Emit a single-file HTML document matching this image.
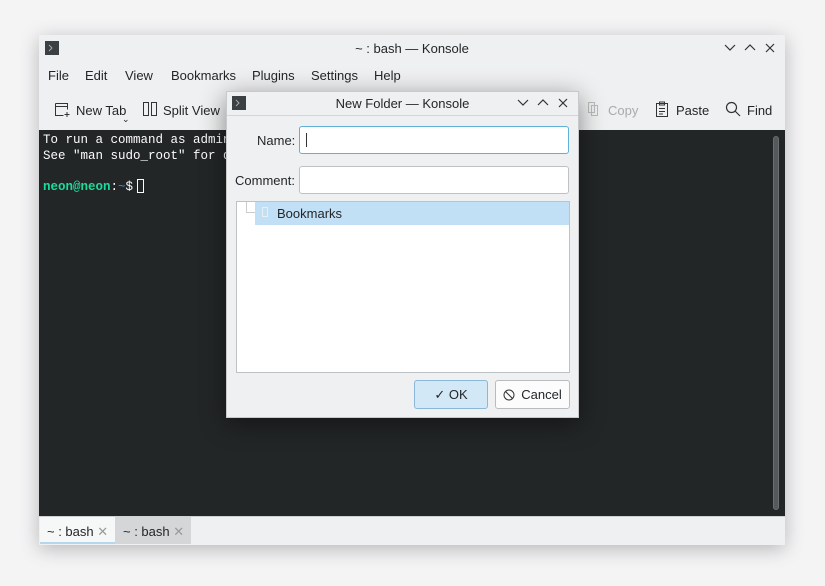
<!DOCTYPE html>
<html><head><meta charset="utf-8"><style>
*{box-sizing:border-box;margin:0;padding:0}
body{width:825px;height:586px;background:#f4f4f5;font-family:"Liberation Sans","DejaVu Sans",sans-serif;font-size:13px;color:#232629;position:relative;overflow:hidden}
.a{position:absolute}
.win{left:39px;top:35px;width:746px;height:510px;background:#eff0f1;box-shadow:0 4px 18px rgba(0,0,0,.25)}
.term{left:0;top:95px;width:746px;height:386px;background:#232627;font-family:"Liberation Mono",monospace;font-size:12.5px;color:#fcfcfc}
.mono{white-space:pre;line-height:15.5px}
.dlg{left:226px;top:91px;width:353px;height:327px;background:#eff0f1;box-shadow:0 6px 24px rgba(0,0,0,.45);border:1px solid #c8c9ca}
.field{background:#fff;border:1px solid #bfc2c5;border-radius:3px}
.btn{border:1px solid #b9bcbf;border-radius:3px;background:#fcfcfc;display:flex;align-items:center;justify-content:center;gap:6px}
svg{display:block}
</style></head><body>
<div class="a win">
 <div class="a" style="left:6px;top:6px;width:14px;height:14px;background:#3b4045"></div>
 <svg class="a" style="left:8px;top:9px" width="8" height="8"><path d="M2 1l3 3-3 3" stroke="#aaa" fill="none"/></svg>
 <div class="a" style="left:0;width:746px;top:6px;text-align:center;font-size:13px">~ : bash — Konsole</div>
 <svg class="a" style="left:684px;top:7px" width="56" height="12" stroke="#333" fill="none" stroke-width="1.2"><path d="M2 3l5 5 5-5M22 8l5-5 5 5M43 2l8 8M51 2l-8 8"/></svg>
 <div class="a" style="left:9px;top:33px;word-spacing:0">File</div>
 <div class="a" style="left:46px;top:33px">Edit</div>
 <div class="a" style="left:86px;top:33px">View</div>
 <div class="a" style="left:132px;top:33px">Bookmarks</div>
 <div class="a" style="left:213px;top:33px">Plugins</div>
 <div class="a" style="left:272px;top:33px">Settings</div>
 <div class="a" style="left:335px;top:33px">Help</div>
 <svg class="a" style="left:15px;top:66px" width="16" height="16" stroke="#333" fill="none"><path d="M1.5 2.5h12v6M1.5 2.5v12h8M1.5 5.5h12M13 11v5M10.5 13.5h5"/></svg>
 <div class="a" style="left:37px;top:68px">New Tab</div>
 <div class="a" style="left:83px;top:79px;font-size:9px">⌄</div>
 <svg class="a" style="left:103px;top:66px" width="16" height="16" stroke="#333" fill="none"><path d="M1.5 1.5h5v13h-5zM9.5 1.5h5v13h-5z"/></svg>
 <div class="a" style="left:124px;top:68px">Split View</div>
 <svg class="a" style="left:546px;top:66px" width="16" height="16" stroke="#bbb" fill="none"><path d="M3.5 1.5h6v10h-6zM6.5 4.5h6v10h-6z"/></svg>
 <div class="a" style="left:569px;top:68px;color:#a8aaac">Copy</div>
 <svg class="a" style="left:616px;top:66px" width="14" height="16" stroke="#333" fill="none"><path d="M1.5 2.5h11v13h-11zM4.5 1h5v3h-5zM4 7.5h6M4 10.5h6M4 13h4"/></svg>
 <div class="a" style="left:637px;top:68px">Paste</div>
 <svg class="a" style="left:686px;top:66px" width="16" height="16" stroke="#333" fill="none" stroke-width="1.2"><circle cx="6.5" cy="6.5" r="5"/><path d="M10 10l5 5"/></svg>
 <div class="a" style="left:708px;top:68px">Find</div>
 <div class="a term">
  <div class="a mono" style="left:4px;top:3px">To run a command as administrator (user "root"), use "sudo &lt;command&gt;".
See "man sudo_root" for details.

<span style="color:#1cdc9a;font-weight:bold">neon@neon</span>:<span style="color:#1d99f3">~</span>$ </div>
  <div class="a" style="left:98px;top:49px;width:7px;height:14px;border:1px solid #fcfcfc"></div>
  <div class="a" style="left:734px;top:6px;width:6px;height:374px;border-radius:3px;background:#55595c;border:1px solid #6a6e71"></div>
 </div>
 <div class="a" style="left:0;top:481px;width:746px;height:29px;background:#eff0f1;border-top:1px solid #d0d1d2"></div>
 <div class="a" style="left:1px;top:482px;width:75px;height:27px;background:#f6f7f7;border-bottom:2px solid #b5d7ee"></div>
 <div class="a" style="left:8px;top:489px">~ : bash <span style="color:#999">✕</span></div>
 <div class="a" style="left:76px;top:482px;width:76px;height:27px;background:#d5d6d7"></div>
 <div class="a" style="left:84px;top:489px">~ : bash <span style="color:#999">✕</span></div>
</div>
<div class="a dlg">
 <div class="a" style="left:0;top:0;width:351px;height:24px;border-bottom:1px solid #d4d5d6"></div>
 <div class="a" style="left:5px;top:4px;width:14px;height:14px;background:#3b4045"></div>
 <svg class="a" style="left:7px;top:7px" width="8" height="8"><path d="M2 1l3 3-3 3" stroke="#aaa" fill="none"/></svg>
 <div class="a" style="left:0;width:351px;top:4px;text-align:center">New Folder — Konsole</div>
 <svg class="a" style="left:289px;top:5px" width="56" height="12" stroke="#333" fill="none" stroke-width="1.2"><path d="M2 3l5 5 5-5M22 8l5-5 5 5M43 2l8 8M51 2l-8 8"/></svg>
 <div class="a" style="left:30px;top:41px">Name:</div>
 <div class="a field" style="left:72px;top:34px;width:270px;height:28px;border-color:#5fb1d8"></div>
 <div class="a" style="left:79px;top:41px;width:1px;height:14px;background:#333"></div>
 <div class="a" style="left:8px;top:81px">Comment:</div>
 <div class="a field" style="left:72px;top:74px;width:270px;height:28px"></div>
 <div class="a" style="left:9px;top:109px;width:334px;height:172px;background:#fff;border:1px solid #bfc2c5"></div>
 <div class="a" style="left:19px;top:110px;width:10px;height:11px;border-left:1px solid #ccc;border-bottom:1px solid #ccc"></div>
 <div class="a" style="left:28px;top:110px;width:314px;height:23px;background:#c2e0f5"></div>
 <div class="a" style="left:35px;top:115px;width:6px;height:10px;border:1px solid #e8eef3"></div>
 <div class="a" style="left:50px;top:114px">Bookmarks</div>
 <div class="a btn" style="left:187px;top:288px;width:74px;height:29px;background:#d3e8f6;border-color:#8ab8d6">✓ OK</div>
 <div class="a btn" style="left:268px;top:288px;width:75px;height:29px"><svg width="12" height="12" stroke="#333" fill="none"><circle cx="6" cy="6" r="5"/><path d="M2.5 2.5l7 7"/></svg>Cancel</div>
</div>
</body></html>
